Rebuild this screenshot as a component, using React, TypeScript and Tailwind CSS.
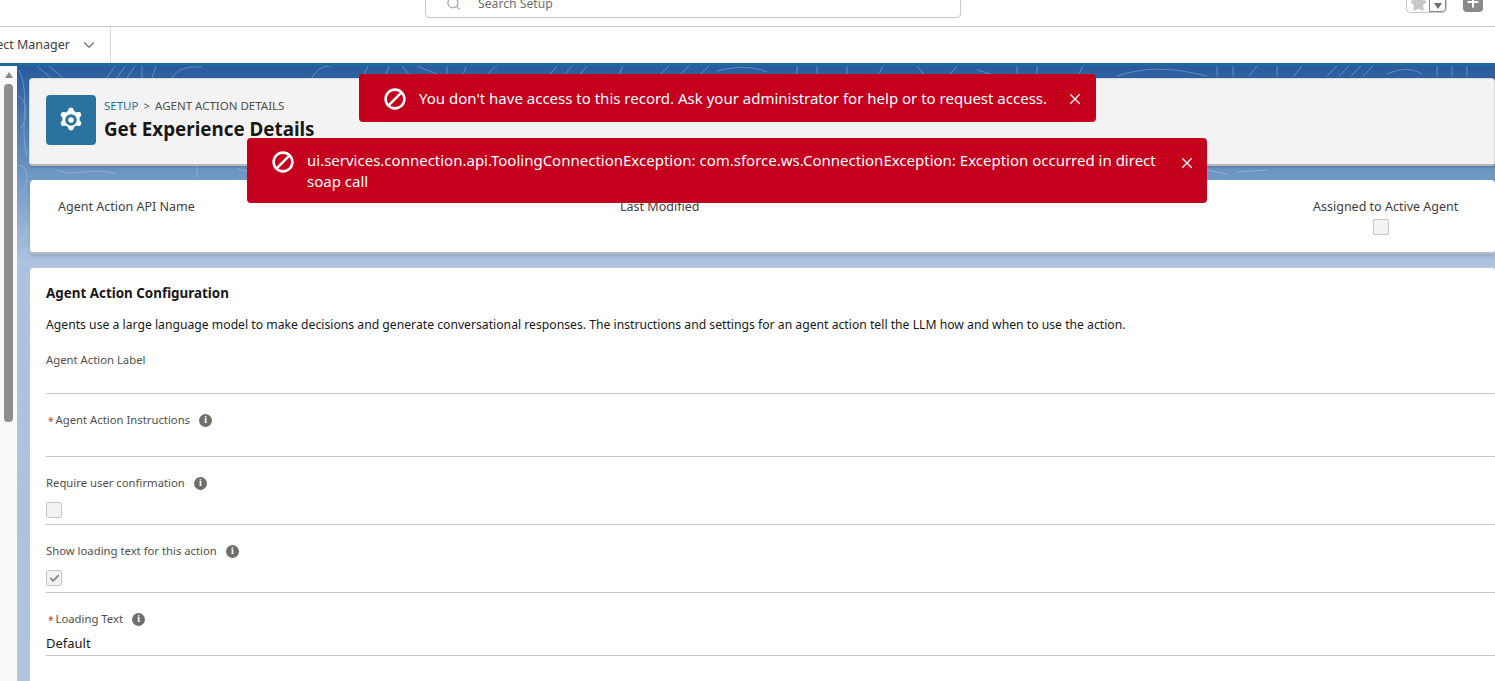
import { Search, ChevronDown, Plus, Star, X, Check } from 'lucide-react';

const sans = "font-['Noto_Sans','Open_Sans',sans-serif]";

function InfoDot() {
  return (
    <span className="w-[13px] h-[13px] rounded-full bg-[#706e6b] flex items-center justify-center shrink-0">
      <span className="text-white text-[10px] leading-none font-bold font-['Liberation_Serif',serif]">i</span>
    </span>
  );
}

function Req() {
  return <span className="text-[#c23934] text-[10px] leading-none mr-[2px] ml-[2px] mt-[2px]">*</span>;
}

function NoEntry() {
  return (
    <svg viewBox="0 0 22 22" className="w-[22px] h-[22px]" fill="none" stroke="#fff" strokeWidth="2.6">
      <circle cx="11" cy="11" r="9.4" />
      <path d="M17.6 4.4 4.4 17.6" />
    </svg>
  );
}

function Toast({ className, text, iconPos }: { className: string; text: string; iconPos: string }) {
  return (
    <div className={`absolute bg-[#c4001d] rounded-[4px] text-white z-20 ${className}`}>
      <div className={`absolute ${iconPos}`}>
        <NoEntry />
      </div>
      <p className="text-[15px] leading-[21px]">{text}</p>
    </div>
  );
}

function Field({ label, required, info, gap, children }: { label: string; required?: boolean; info?: boolean; gap: string; children?: React.ReactNode }) {
  return (
    <div className={`border-b border-[#c9c7c5] ${gap}`}>
      <div className="flex items-center h-[16px] text-[11.3px] text-[#514f4d]">
        {required && <Req />}
        <span>{label}</span>
        {info && <span className="ml-[9px]"><InfoDot /></span>}
      </div>
      {children}
    </div>
  );
}

export default function App() {
  return (
    <div className={`w-[1495px] h-[681px] overflow-hidden bg-white relative flex flex-col ${sans}`}>
      {/* top bar, scrolled partly off the page */}
      <div className="h-[27px] shrink-0 border-b border-[#c9c7c5] relative">
        <div className="absolute left-[425px] top-[-20px] w-[536px] h-[38px] border border-[#c9c7c5] rounded-[4px] flex items-end pb-[5px]">
          <Search className="ml-[20px] mb-[1px] w-[15px] h-[15px] text-[#a5a3a1]" />
          <span className="ml-[17px] text-[12.2px] leading-[17px] text-[#706e6b]">Search Setup</span>
        </div>
        <div className="absolute left-[1406px] top-[-10px] w-[41px] h-[23px] border border-[#c9c7c5] rounded-[4px] flex">
          <div className="w-[22px] flex items-center justify-center pt-[3px]">
            <Star className="w-[17px] h-[17px] text-[#c9c7c5] fill-[#c9c7c5]" />
          </div>
          <div className="flex-1 border border-[#8a8a8a] rounded-r-[4px] flex justify-center pt-[11px]">
            <div className="w-0 h-0 border-l-[4px] border-r-[4px] border-t-[6px] border-l-transparent border-r-transparent border-t-[#706e6b]"></div>
          </div>
        </div>
        <div className="absolute left-[1463px] top-[-8px] w-[20px] h-[20px] rounded-[4px] bg-[#8a8a8a] flex items-center justify-center">
          <Plus className="w-[16px] h-[16px] text-white" strokeWidth={3} />
        </div>
      </div>

      {/* tab bar */}
      <div className="h-[36px] shrink-0 flex overflow-hidden">
        <div className="w-[111px] border-r border-[#dddbda] flex items-center justify-end pr-[12px] text-[12.5px] text-[#3e3e3c] whitespace-nowrap">
          <span>ect Manager</span>
          <ChevronDown className="ml-[10px] w-[18px] h-[18px] shrink-0 text-[#706e6b]" strokeWidth={1.5} />
        </div>
      </div>

      <div className="flex-1 flex min-h-0 border-t-[3px] border-[#1f6a9c]">
        {/* scrollbar */}
        <div className="w-[17px] shrink-0 bg-[#fafafa] flex flex-col items-center pt-[6px]">
          <div className="w-0 h-0 border-l-[4px] border-r-[4px] border-b-[6px] border-l-transparent border-r-transparent border-b-[#8a8a8a]"></div>
          <div className="w-[9px] h-[338px] mt-[6px] rounded-[4px] bg-[#8e8e8e]"></div>
        </div>

        {/* page body */}
        <div className="flex-1 min-w-0 relative bg-[linear-gradient(to_bottom,#285b9e_0px,#6a94c2_104px,#adc2de_195px,#b0c4df_100%)] pl-[13px] pt-[12px] overflow-hidden">
          <svg className="absolute left-0 top-0 w-full h-[200px] opacity-35" viewBox="0 0 1478 200" fill="none" stroke="#cfe0f2" strokeWidth="1">
            <path d="M2 4 C14 30 2 60 10 90 M20 0 l14 12 M32 0 l14 12 M90 12 l8 -12 M100 12 l8 -12 M110 12 l8 -12 M125 12 v-12 M135 12 l4 -12 M155 12 C160 3 170 0 185 1 M295 12 C300 3 305 0 315 0 M345 12 l6 -12 M368 12 l4 -12 M385 0 l10 12 M400 0 l20 8 M430 12 v-12 M445 12 l4 -12 M470 12 C472 5 476 2 480 0" />
            <path d="M530 12 l10 -12 M545 12 l10 -12 M560 12 l10 -12 M600 12 l6 -12 M640 12 l12 -12 M660 12 l12 -12 M680 12 l12 -12 M700 5 C720 0 735 0 750 6 M780 12 v-12 M800 12 v-12 M830 12 v-12 M860 12 l6 -12 M900 0 l10 12 M930 12 l10 -12 M960 4 l20 6 M1000 12 v-12 M1020 12 v-12 M1060 12 l6 -12" />
            <path d="M1100 10 C1140 -3 1170 6 1190 10 M1200 0 v10 M1216 0 v10 M1240 0 l-8 10 M1260 0 v10 M1285 0 l-8 10 M1310 10 l10 -10 M1322 10 l10 -10 M1334 10 l10 -10 M1346 10 l10 -10 M1370 8 C1385 2 1395 2 1405 8 M1420 10 V0 M1435 10 V0 M1450 10 V0" />
            <path d="M40 104 C60 112 70 100 100 108 M180 100 v12 M220 102 C240 112 260 96 280 104 M1060 112 C1075 96 1105 96 1120 112 M1130 112 C1140 100 1150 100 1160 112 M1190 104 l20 4 M1220 106 l30 -2" />
            <path d="M2 30 C10 36 12 50 4 62 M0 100 C12 96 14 120 2 130 M2 150 C12 155 12 170 2 176" />
          </svg>

          <div className="relative flex flex-col">
            {/* page header */}
            <div className="h-[88px] -ml-px bg-[#f3f3f3] border border-[#dddbda] border-b-2 border-b-[#b8b8b8] rounded-[4px] flex items-center pl-[16px] shadow-[0_2px_2px_rgba(0,0,0,0.1)]">
              <div className="w-[50px] h-[50px] rounded-[4px] bg-[#2a739e] flex items-center justify-center mt-[-3px]">
                <svg viewBox="0 0 26 26" className="w-[26px] h-[26px]" fill="#fff">
                  <path fillRule="evenodd" d="M10.3 2.6a2.8 2.8 0 0 1 5.4 0l.4 1.5 2.2 1.3 1.6-.4a2.8 2.8 0 0 1 2.7 4.6l-1.1 1.2v2.4l1.1 1.2a2.8 2.8 0 0 1-2.7 4.6l-1.6-.4-2.2 1.3-.4 1.5a2.8 2.8 0 0 1-5.4 0l-.4-1.5-2.2-1.3-1.6.4a2.8 2.8 0 0 1-2.7-4.6l1.1-1.2v-2.4L3.4 9.6a2.8 2.8 0 0 1 2.7-4.6l1.6.4 2.2-1.3zM13 7.2a5.8 5.8 0 1 0 0 11.6 5.8 5.8 0 0 0 0-11.6zm0 3a2.8 2.8 0 1 1 0 5.6 2.8 2.8 0 0 1 0-5.6z" />
                </svg>
              </div>
              <div className="ml-[8px] mt-[-3px]">
                <div className="text-[11.5px] leading-[16px] text-[#514f4d]">
                  <span className="text-[#2a739e]">SETUP</span>
                  <span className="mx-[5px]">&gt;</span>
                  <span>AGENT ACTION DETAILS</span>
                </div>
                <h1 className="text-[18.8px] leading-[26px] font-bold text-[#181818] mt-[2px]">Get Experience Details</h1>
              </div>
            </div>

            {/* highlights */}
            <div className="h-[74px] mt-[14px] bg-white rounded-[4px] border-b-2 border-[#b9bec6] text-[12.5px] text-[#3e3e3c] shadow-[0_2px_3px_rgba(0,0,0,0.12)]">
              <div className="flex pt-[18px]">
                <div className="ml-[28px] w-[562px]">Agent Action API Name</div>
                <div className="w-[693px]">Last Modified</div>
                <div className="flex flex-col">
                  <span className="whitespace-nowrap">Assigned to Active Agent</span>
                  <span className="w-[16px] h-[16px] mt-[2px] ml-[60px] rounded-[2px] border border-[#c9c7c5] bg-[#f3f3f3]"></span>
                </div>
              </div>
            </div>

            {/* configuration */}
            <div className="mt-[13px] bg-white rounded-[4px] border-t border-[#c9c7c5] pl-[16px] pt-[16px] h-[500px]">
              <h2 className="text-[13.4px] leading-[18px] font-bold text-[#181818]">Agent Action Configuration</h2>
              <p className="mt-[14px] text-[12.2px] leading-[18px] text-[#181818] whitespace-nowrap">
                Agents use a large language model to make decisions and generate conversational responses. The instructions and settings for an agent action tell the LLM how and when to use the action.
              </p>
              <div className="mt-[18px] flex flex-col">
                <Field label="Agent Action Label" gap="h-[42px]" />
                <Field label="Agent Action Instructions" required info gap="mt-[18px] h-[45px]" />
                <Field label="Require user confirmation" info gap="mt-[18px] h-[50px]">
                  <span className="block w-[16px] h-[16px] mt-[11px] rounded-[2px] border border-[#c9c7c5] bg-[#f3f3f3]"></span>
                </Field>
                <Field label="Show loading text for this action" info gap="mt-[18px] h-[50px]">
                  <span className="flex items-center justify-center w-[16px] h-[16px] mt-[11px] rounded-[2px] border border-[#c9c7c5] bg-[#f3f3f3]">
                    <Check className="w-[11px] h-[11px] text-[#8a8a8a]" strokeWidth={4} />
                  </span>
                </Field>
                <Field label="Loading Text" required info gap="mt-[18px] h-[45px]">
                  <div className="text-[13px] leading-[20px] mt-[6px] text-[#181818]">Default</div>
                </Field>
              </div>
            </div>
          </div>
        </div>
      </div>

      {/* toasts */}
      <Toast className="left-[359px] top-[74px] w-[737px] h-[48px] pl-[60px] pt-[14px]" iconPos="left-[25px] top-[14px]" text="You don't have access to this record. Ask your administrator for help or to request access." />
      <X className="absolute z-30 left-[1066px] top-[90px] w-[18px] h-[18px] text-white" strokeWidth={1.6} />
      <Toast className="left-[247px] top-[138px] w-[960px] h-[65px] pl-[60px] pr-[50px] pt-[12px]" iconPos="left-[25px] top-[13px]" text="ui.services.connection.api.ToolingConnectionException: com.sforce.ws.ConnectionException: Exception occurred in direct soap call" />
      <X className="absolute z-30 left-[1178px] top-[154px] w-[18px] h-[18px] text-white" strokeWidth={1.6} />
    </div>
  );
}
